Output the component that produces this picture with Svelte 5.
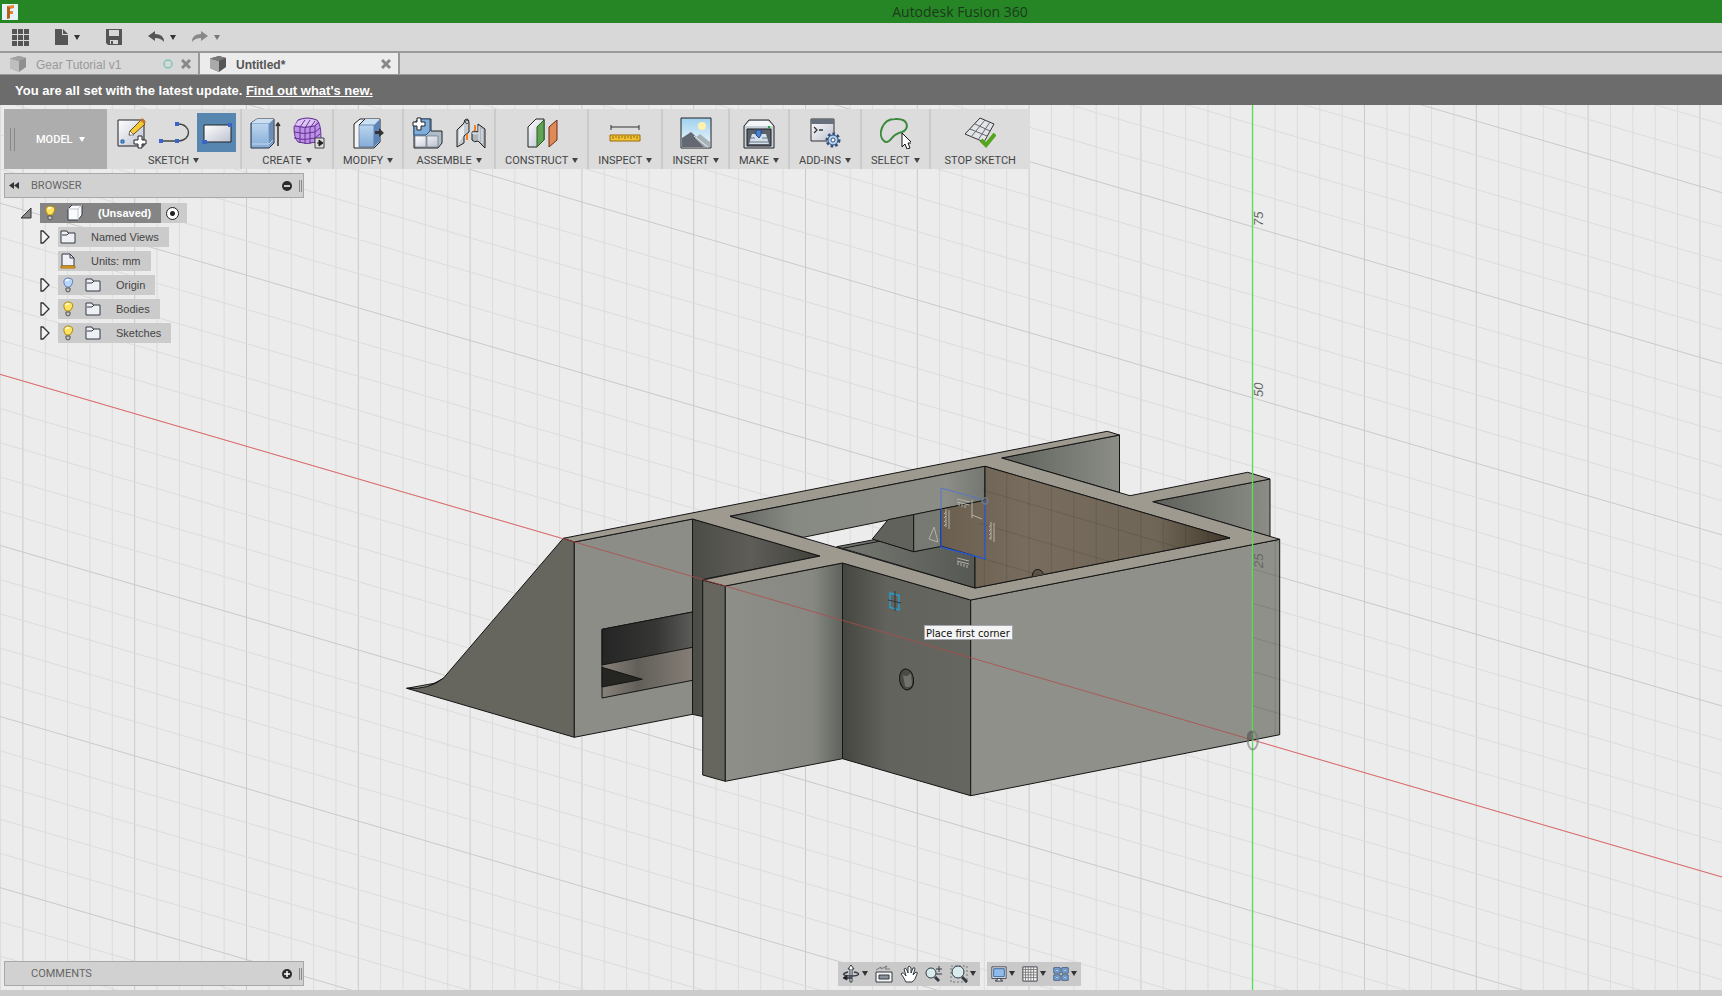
<script lang="ts">
	type Group = { label: string; icons: string[]; menu: boolean };

	const groups: Group[] = [
		{ label: 'SKETCH', icons: ['sketch', 'arc', 'rectangle'], menu: true },
		{ label: 'CREATE', icons: ['extrude', 'form'], menu: true },
		{ label: 'MODIFY', icons: ['presspull'], menu: true },
		{ label: 'ASSEMBLE', icons: ['component', 'joint'], menu: true },
		{ label: 'CONSTRUCT', icons: ['plane'], menu: true },
		{ label: 'INSPECT', icons: ['measure'], menu: true },
		{ label: 'INSERT', icons: ['image'], menu: true },
		{ label: 'MAKE', icons: ['printer'], menu: true },
		{ label: 'ADD-INS', icons: ['script'], menu: true },
		{ label: 'SELECT', icons: ['select'], menu: true },
		{ label: 'STOP SKETCH', icons: ['stop'], menu: false }
	];

	const tree = [
		{ label: 'Named Views', arrow: true, icons: ['folder'] },
		{ label: 'Units: mm', arrow: false, icons: ['units'] },
		{ label: 'Origin', arrow: true, icons: ['bulb-off', 'folder'] },
		{ label: 'Bodies', arrow: true, icons: ['bulb', 'folder'] },
		{ label: 'Sketches', arrow: true, icons: ['bulb', 'folder'] }
	];

	const navTools = [
		{ name: 'orbit', menu: true },
		{ name: 'look', menu: false },
		{ name: 'pan', menu: false },
		{ name: 'zoom', menu: false },
		{ name: 'fit', menu: true }
	];

	const displayTools = ['display', 'grid', 'viewports'];

	let activeTool = $state('rectangle');

	// Ground grid: every fifth line is a major one
	const stepX = 22.36;
	const stepY = 34.22;
	const slope = 0.292;
	const originX = 1252.7;
	const axisY = 374.3;

	const verticals = Array.from({ length: 79 }, (_, i) => i - 57).map((n) => ({
		x: originX + n * stepX,
		major: n % 5 === 0
	}));

	const slants = Array.from({ length: 42 }, (_, i) => i - 23).map((n) => ({
		y: axisY + n * stepY,
		major: n % 5 === 0
	}));
</script>

{#snippet gridLines()}
	{#each verticals as line}
		<path class={line.major ? 'major' : 'minor'} d="M{line.x} 100V1000" />
	{/each}
	{#each slants as line}
		<path class={line.major ? 'major' : 'minor'} d="M0 {line.y}L1722 {line.y + 1722 * slope}" />
	{/each}
{/snippet}

{#snippet caret()}
	<svg class="caret" width="6" height="5" viewBox="0 0 6 5" aria-hidden="true"><path d="M0 0h6L3 5z" fill="currentColor" /></svg>
{/snippet}

{#snippet cube(dim: boolean)}
	<svg width="16" height="16" viewBox="0 0 16 16" aria-hidden="true" opacity={dim ? 0.55 : 1}>
		<path d="M0 2.500L9 0l7 2v9l-7 5-9-4z" fill="#555" />
		<path d="M0 2.500L9 5v11l-9-4z" fill="#aaa" />
		<path d="M0 2.500L9 0l7 2-7 3z" fill="#777" />
	</svg>
{/snippet}

{#snippet toolIcon(name: string)}
	<svg width="32" height="32" viewBox="0 0 32 32" fill="none" aria-hidden="true">
		{#if name === 'sketch'}
			<path d="M3 3h26v26H3z" fill="url(#paper)" stroke="#222" />
			<path d="M15 14l11-11 4 4-11 10-5 1z" fill="#f3cc35" stroke="#6b4a1c" />
			<path d="M25 3l2-2 4 4-2 2z" fill="#c7762f" />
			<path d="M14 18l1-4 4 4z" fill="#fff" stroke="#444" stroke-width=".6" />
			<path d="M6 23h3v3H6z" fill="#4fa3e8" stroke="#2660a8" />
			<path d="M23 19h4v4h4v4h-4v4h-4v-4h-4v-4h4z" fill="#fff" stroke="#222" />
		{:else if name === 'arc'}
			<path d="M3 24h17M20 24c14 0 14-17 0-17" stroke="#444" stroke-width="1.400" />
			<path d="M1 22h4v4H1zM17 22h4v4h-4zM17 5h4v4h-4z" fill="#3866c8" />
		{:else if name === 'rectangle'}
			<path d="M3 8h27v17H3z" fill="url(#paper)" stroke="#222" />
			<path d="M1 23h5v4H1zM27 6h4v4h-4z" fill="#3866c8" />
		{:else if name === 'extrude'}
			<path d="M1 6l6-4h17v24l-5 5H1z" fill="#8fb3d8" stroke="#222e40" />
			<path d="M1 6l6-4h17l-5 4z" fill="#cde0f2" />
			<path d="M2 7h16v23H2z" fill="url(#blue)" />
			<path d="M19 7l4-4v22l-4 4z" fill="#6c8db8" />
			<path d="M2 27h17l4-4" stroke="#c6d9ec" />
			<path d="M28 29V7M26 9l2-3 2 3" stroke="#333" stroke-width="1.500" />
		{:else if name === 'form'}
			<path d="M5 3q9-4 19 0 4 4 4 18-2 3-5 4-9 3-18 0-4-4-4-15z" fill="#bd91e8" stroke="#633391" />
			<path d="M5 4q9-4 19 0l-3 4Q10 10 2 8z" fill="#dfc5f5" />
			<path d="M2 9q9 3 20 0l4-4M1 15q10 3 21 0l5-4M1 21q10 3 21 0l5-4M7 10v16M12 11v16M17 11v16M22 9v17M7 10l5-7M12 11l5-8M17 11l5-7" stroke="#633391" />
			<path d="M22 21h9v10h-9z" fill="#ddd" stroke="#444" />
			<path d="M24 26h3M26 23l4 3-4 3z" fill="#222" stroke="#222" />
		{:else if name === 'presspull'}
			<path d="M2 7l6-5h20v23l-6 6H2z" fill="#f4f4f4" stroke="#222" />
			<path d="M7 8l5-6h16l-6 6z" fill="#cae0f5" />
			<path d="M7 8h15v22H7z" fill="url(#blue)" stroke="#3a577e" stroke-width=".6" />
			<path d="M22 8l6-6v22l-6 6z" fill="#5c84b6" />
			<path d="M7 8l6-6" stroke="#222" />
			<path d="M23 14h4v-3l5 5-5 4v-3h-4z" fill="#333" />
		{:else if name === 'component'}
			<path d="M2 19V6l4-4h13v12h11v12l-4 5H2z" fill="#aebdcb" stroke="#222" />
			<path d="M2 6l4-4h12v12l-4 4H2z" fill="#80aeda" stroke="#29537f" />
			<path d="M3 19h11v11H3zM15 19h11v11H15z" fill="url(#paper)" stroke="#586470" stroke-width=".6" />
			<path d="M5 1h4v4h4v4H9v4H5V9H1V5h4z" fill="#fff" stroke="#222" />
		{:else if name === 'joint'}
			<path d="M2 13l7-7q0-4 3-4 2 0 2 4v9l-5 4v7l-7 4z" fill="#c3cad0" stroke="#222" />
			<path d="M4 13l5-5v10l-5 8z" fill="#e8ecf0" /><circle cx="12" cy="5" r="1.500" fill="#fff" stroke="#444" />
			<path d="M30 12l-7-5v8q-6-2-6 1v7q2 3 6 1l7 7z" fill="#adb5bd" stroke="#222" />
			<path d="M24 9v15M17 16q3 2 6 0M27 12v14" stroke="#e9edf0" />
			<path d="M12 17v6M20 8v6" stroke="#f18029" stroke-width="2" />
		{:else if name === 'plane'}
			<path d="M2 10l8-8h8v21l-7 7H2z" fill="url(#paper)" stroke="#222" />
			<path d="M11 10l7-7v20l-7 7z" fill="#61a352" stroke="#285e26" />
			<path d="M23 10l8-7v20l-8 7z" fill="#e08a57" stroke="#6a2f16" />
		{:else if name === 'measure'}
			<path d="M2 8v5M2 10h28M30 8v5" stroke="#333" />
			<path d="M1 18h30v6H1z" fill="#efc534" stroke="#9e680c" />
			<path d="M4 19v3M7 19v2M10 19v3M13 19v2M16 19v3M19 19v2M22 19v3M25 19v2M28 19v3" stroke="#9e680c" />
		{:else if name === 'image'}
			<path d="M1 1h30v30H1z" fill="url(#sky)" stroke="#222" />
			<circle cx="22" cy="9" r="4" fill="#fff0ad" />
			<path d="M2 21l9-6 16 15H2z" fill="#646873" />
			<path d="M15 21l5-4 10 8v5h-6z" fill="#a6b2b8" />
			<path d="M14 19l14 11" stroke="#eee" />
		{:else if name === 'printer'}
			<path d="M1 9l5-6h20l5 6v22H1z" fill="#c8d0d8" stroke="#222" />
			<path d="M2 9l5-5h18l5 5z" fill="#f4f7fa" />
			<path d="M4 12h24v17H4z" fill="#596169" stroke="#222" />
			<path d="M9 17h14l3 10H6z" fill="#d3e0eb" />
			<path d="M13 13h5v5l-2 3-3-3z" fill="#4b83d0" stroke="#244b8c" />
			<path d="M6 25h20M8 21h4M19 21h5" stroke="#697682" /><path d="M25 9h2v2h-2z" fill="#22a33b" />
		{:else if name === 'script'}
			<path d="M2 2h23v22H2z" fill="url(#paper)" stroke="#333" /><path d="M2 2h23v5H2z" fill="#69707d" />
			<path d="M5 10l3 3-3 3M10 13h4" stroke="#333" stroke-width="1.300" />
			<circle cx="24" cy="23" r="6" fill="#b4d2ef" stroke="#344e77" stroke-width="3" stroke-dasharray="2.500 2" />
			<circle cx="24" cy="23" r="5" fill="#b4d2ef" stroke="#344e77" /><circle cx="24" cy="23" r="2" fill="#fff" stroke="#344e77" />
		{:else if name === 'select'}
			<path d="M5 24C-2 18 3 2 16 2c15-1 14 11 7 13-9 2-8 5-13 9q-3 2-5 0z" stroke="#3a8a3d" stroke-width="2" />
			<path d="M23 16v14l3-3 2 5 3-1-2-5h4z" fill="#fff" stroke="#111" />
		{:else}
			<path d="M16 1l14 6-10 18L1 17z" fill="#e2e4e8" stroke="#333" />
			<path d="M21 3L7 20M26 5L14 23M11 7l15 7M6 12l17 7" stroke="#62676e" />
			<path d="M17 23l5 5 9-11" stroke="#52a51c" stroke-width="4" />
		{/if}
	</svg>
{/snippet}

{#snippet treeIcon(name: string)}
	<svg width="16" height="16" viewBox="0 0 16 16" fill="none" aria-hidden="true">
		{#if name === 'folder'}
			<path d="M1 14V2h6l1 2h7v10z" fill="#eef0f4" stroke="#333a46" />
			<path d="M2 6h5l2-2" stroke="#333a46" />
		{:else if name === 'units'}
			<path d="M3 1h7l4 4v8H2V1z" fill="#eef0f4" stroke="#333a46" /><path d="M10 1v4h4" stroke="#333a46" />
			<path d="M1 13h14v2H1z" fill="#f2b72d" stroke="#a56e0d" />
		{:else if name === 'body'}
			<path d="M1 4l4-4h10v10l-4 5H1z" fill="#f8fafc" stroke="#333a46" />
			<path d="M1 4h10v11M11 4l4-4" stroke="#c1c8cf" />
		{:else}
			<path d="M6 10Q1 3 7 1q8 0 5 6l-2 3z" fill={name === 'bulb' ? '#ffe461' : '#bad6fb'} stroke={name === 'bulb' ? '#b28a0b' : '#6080b8'} />
			<path d="M6 4q1-2 3-1" stroke="#fff" stroke-width="1.500" />
			<path d="M6 11h4v3l-2 1-2-1z" fill="#bec5cc" stroke="#555" />
		{/if}
	</svg>
{/snippet}

{#snippet navIcon(name: string, size: number)}
	<svg width={size} height={size} viewBox="0 0 18 18" fill="none" stroke="#333a44" aria-hidden="true">
		{#if name === 'orbit'}
			<path d="M8 17V4H6l3-4 3 4h-2v13z" fill="#fff" />
			<path d="M6 7c-8 2-4 4 3 4 9 0 10-3 3-4M3 13h7" stroke-width="1.300" /><path d="M5 10l-4 3 4 2z" fill="#111" />
		{:else if name === 'look'}
			<path d="M1 7h16v10H1z" fill="#f5f5f5" /><path d="M4 10h10v4H4z" fill="#8c929b" /><path d="M1 5l5-3v2l6-3-2 3h5" stroke="#777" />
		{:else if name === 'pan'}
			<path d="M6 17Q3 11 1 9q2-3 5 2L4 4q2-2 3 1l1 3V2q2-2 3 1v5l2-5q2-1 2 1l-2 6 3-3q2 0 1 2-2 7-5 8z" fill="#fff" />
		{:else if name === 'zoom'}
			<circle cx="6" cy="8" r="5" fill="#d8ecee" /><path d="M10 12l4 4" stroke-width="3" /><path d="M14 1v6M11 4h6M11 9h6" />
		{:else if name === 'fit'}
			<path d="M1 1h16v16H1z" stroke-dasharray="2 2" stroke="#777" /><circle cx="8" cy="7" r="6" fill="#d8ecee" /><path d="M12 12l5 5" stroke-width="3" />
		{:else if name === 'display'}
			<path d="M1 1h16v13H1z" fill="#f5f5f5" /><path d="M3 3h12v9H3z" fill="#8fbcec" stroke="#315b90" /><path d="M7 14v2H5v1h8v-1h-2v-2z" fill="#eee" />
		{:else if name === 'grid'}
			<path d="M1 1h16v16H1z" fill="#f5f5f5" /><path d="M1 4h16M1 7h16M1 10h16M1 13h16M4 1v16M7 1v16M10 1v16M13 1v16" stroke="#777" />
		{:else}
			<path d="M1 2h7v6H1zM10 2h7v6h-7zM1 10h7v6H1zM10 10h7v6h-7z" fill="#91b9e7" stroke="#28476f" />
			<path d="M3 4h3v2H3zM12 4h3v2h-3zM3 12h3v2H3zM12 12h3v2h-3z" fill="#d8eafa" stroke="#5986ba" />
		{/if}
	</svg>
{/snippet}

<div class="app">
	<header class="titlebar">
		<svg class="logo" width="16" height="16" viewBox="0 0 16 16" aria-hidden="true">
			<path d="M0 0h16v16H0z" fill="#e4f2fa" />
			<path d="M5 2l7-1v3l-4 1v2h3v3H8v4l-3 1z" fill="#e8862e" /><path d="M5 2l3 2v10l-3 1z" fill="#b85f1f" />
		</svg>
		<h1>Autodesk Fusion 360</h1>
	</header>

	<nav class="quickbar" aria-label="Quick access">
		<button aria-label="Data panel">
			<svg width="17" height="17" viewBox="0 0 17 17"><path d="M0 0h5v5H0zM6 0h5v5H6zM12 0h5v5h-5zM0 6h5v5H0zM6 6h5v5H6zM12 6h5v5h-5zM0 12h5v5H0zM6 12h5v5H6zM12 12h5v5h-5z" fill="#555" /></svg>
		</button>
		<button aria-label="File">
			<svg width="13" height="16" viewBox="0 0 13 16"><path d="M0 0h7v6h6v10H0zM8 0l5 5H8z" fill="#555" /></svg>
			{@render caret()}
		</button>
		<button aria-label="Save">
			<svg width="16" height="16" viewBox="0 0 16 16"><path d="M0 0h16v16H2l-2-2z" fill="#555" /><path d="M3 1h10v6H3zM4 11h8v4H4z" fill="#d8d8d8" /><path d="M5 12h2v3H5z" fill="#555" /></svg>
		</button>
		<button aria-label="Undo">
			<svg width="16" height="12" viewBox="0 0 16 12"><path d="M0 5l7-5v3q9 0 9 8-3-4-9-4v3z" fill="#555" /></svg>
			{@render caret()}
		</button>
		<button class="dim" aria-label="Redo">
			<svg width="16" height="12" viewBox="0 0 16 12"><path d="M16 5L9 0v3Q0 3 0 11q3-4 9-4v3z" fill="#888" /></svg>
			{@render caret()}
		</button>
	</nav>

	<div class="tabs">
		<div class="tab">
			<button class="tab-name">{@render cube(true)}<span>Gear Tutorial v1</span></button>
			<svg width="10" height="10" viewBox="0 0 10 10" aria-hidden="true"><circle cx="5" cy="5" r="4" fill="none" stroke="#78c4b4" stroke-width="1.400" /></svg>
			<button class="close" aria-label="Close Gear Tutorial v1"><svg width="10" height="10" viewBox="0 0 10 10"><path d="M1 1l8 8M9 1L1 9" stroke="#888" stroke-width="3" /></svg></button>
		</div>
		<div class="tab active">
			<button class="tab-name">{@render cube(false)}<span>Untitled*</span></button>
			<button class="close" aria-label="Close Untitled"><svg width="10" height="10" viewBox="0 0 10 10"><path d="M1 1l8 8M9 1L1 9" stroke="#888" stroke-width="3" /></svg></button>
		</div>
	</div>

	<p class="notice">You are all set with the latest update. <a href="#whats-new">Find out what's new.</a></p>

	<main class="workspace">
		<svg class="canvas" viewBox="0 105 1722 885" preserveAspectRatio="xMidYMid slice" role="img" aria-label="3D model view">
			<defs>
				<linearGradient id="paper" x2="1" y2="1"><stop stop-color="#fff" /><stop offset="1" stop-color="#bcc1cf" /></linearGradient>
				<linearGradient id="blue" x2="0" y2="1"><stop stop-color="#bbd5ee" /><stop offset="1" stop-color="#86acd8" /></linearGradient>
				<linearGradient id="sky" x2="0" y2="1"><stop stop-color="#9fd0ee" /><stop offset="1" stop-color="#f3fafd" /></linearGradient>
				<linearGradient id="recess"><stop stop-color="#4c4c47" /><stop offset=".45" stop-color="#5e5d57" /><stop offset="1" stop-color="#40403b" /></linearGradient>
				<linearGradient id="pillar"><stop stop-color="#8d8f88" /><stop offset=".75" stop-color="#868881" /><stop offset="1" stop-color="#60625d" /></linearGradient>
				<linearGradient id="front"><stop stop-color="#464641" /><stop offset=".35" stop-color="#62635d" /><stop offset="1" stop-color="#656660" /></linearGradient>
				<linearGradient id="opening"><stop stop-color="#252525" /><stop offset=".6" stop-color="#363635" /><stop offset="1" stop-color="#5b5c58" /></linearGradient>
				<linearGradient id="ledge"><stop stop-color="#87817a" /><stop offset=".4" stop-color="#625f59" /><stop offset="1" stop-color="#857e76" /></linearGradient>
				<linearGradient id="backwall"><stop stop-color="#62645f" /><stop offset=".25" stop-color="#878983" /><stop offset=".85" stop-color="#8b8d86" /><stop offset="1" stop-color="#747671" /></linearGradient>
				<linearGradient id="brown"><stop stop-color="#6b6050" /><stop offset=".3" stop-color="#776c5d" /><stop offset=".75" stop-color="#706657" /><stop offset="1" stop-color="#41372a" /></linearGradient>
				<linearGradient id="fin"><stop stop-color="#5e605b" /><stop offset=".6" stop-color="#797b75" /><stop offset="1" stop-color="#8b8d86" /></linearGradient>
				<linearGradient id="floor"><stop stop-color="#777973" /><stop offset="1" stop-color="#565853" /></linearGradient>
				<clipPath id="overlay-clip"><path d="M1252.700 544L1279.700 539.300V734.700L1252.700 740zM985 466.300L1230 538 975 588V556z" /></clipPath>
			</defs>

			<path d="M0 100h1722v900H0z" fill="#ececec" />
			<g class="lines">{@render gridLines()}</g>

			<!-- Body faces -->
			<g class="faces">
				<path d="M1001.700 458L1119.500 435V492.500z" fill="url(#fin)" />
				<path d="M1152.700 501.700L1270 479V536.500z" fill="url(#fin)" />
				<path d="M406.700 688.300L436 683q6-2 8-5L422 690z" fill="#999b95" />
				<path d="M406.700 688.300Q429 690 443.300 678.300L563.300 538.300 574.300 542V737.300z" fill="#66665f" />
				<path d="M574.300 542L692.500 519V714.300L574.300 737.300z" fill="#8b8d86" />
				<path d="M602 629.300L692.500 612V680.300L602 698z" fill="url(#ledge)" />
				<path d="M602 629.300L692.500 612V647.300L602 665z" fill="url(#opening)" />
				<path d="M602 667.300L642.300 679.300 602 687z" fill="#252522" />
				<path d="M692.500 519L820 556 703.300 579.300V716.700L692.500 714.300z" fill="url(#recess)" />
				<path d="M702.700 580L725.300 586V781.300L702.700 775z" fill="#66665f" />
				<path d="M725.300 586L842.500 563V758.700L725.300 781.300z" fill="url(#pillar)" />
				<path d="M842.500 563L970.700 600V795.700L842.500 758.700z" fill="url(#front)" />
				<path d="M970.700 600L1279.700 539.300V734.700L970.700 795.700z" fill="#8f9089" />
				<path
					fill="#9e9a90"
					fill-rule="evenodd"
					d="M563.300 538.300L1107.300 431.300 1119.500 435 1001.700 458 1130 495.700 1247.700 472.300 1270 479 1152.700 501.700 1279.700 539.300 970.700 600 842.500 563 725.300 586 702.700 580 820 556 692.500 519 574.300 542zM730 516.300L975 588 1230 538 985 466.300z"
				/>
				<path d="M730 516.300L985 466.300V500.300L803.300 537.300z" fill="url(#backwall)" />
				<path d="M836.700 546.700L875 539.500 913.700 551.700 940.700 546 975 556V588z" fill="url(#floor)" />
				<path d="M841.700 548.500L881 541" fill="none" />
				<path d="M888 519.700L913.700 514.500V551.700L872.300 539z" fill="#60625b" />
				<path d="M913.700 514.500L940.700 509V546.500L913.700 551.700z" fill="#777973" />
				<path d="M985 466.300L1230 538 975 588V556L940.700 546V509L985 500.300z" fill="url(#brown)" />
				<path d="M1032 576.500q1-7 5.500-7t6 5" fill="#5d5344" />
				<ellipse cx="906.500" cy="679.500" rx="7" ry="10.500" fill="#4a4b45" transform="rotate(-8 906 679)" />
				<path d="M903 675q4 3 8-2l1 12q-4 4-7 1z" fill="#70726b" stroke="none" />
			</g>
			<g class="lines over" clip-path="url(#overlay-clip)">{@render gridLines()}</g>

			<!-- Axes and scale marks -->
			<path d="M0 374.300L563 538.700M1252.700 740L1722 877" stroke="#e26a6a" fill="none" />
			<path d="M563 538.700L1252.700 740" stroke="#b04a4a" fill="none" opacity=".75" />
			<path d="M1252.500 105V990" stroke="#55e055" stroke-width="1.300" />
			<ellipse cx="1252.700" cy="740.500" rx="5" ry="9" fill="none" stroke="#777" stroke-width="2" opacity=".6" />
			<path d="M1247 740v-6q3-5 6-3v9z" fill="#555" opacity=".6" />
			<g class="scale">
				<text transform="translate(1263 226) rotate(-90)">75</text>
				<text transform="translate(1263 397) rotate(-90)">50</text>
				<text transform="translate(1263 568) rotate(-90)">25</text>
			</g>

			<!-- Sketch profile and its constraint glyphs -->
			<path d="M941 509V488L985 500.300" fill="none" stroke="#5578c6" />
			<path d="M941 509V547L985 559V500.300" fill="none" stroke="#2458d8" stroke-width="1.300" />
			<circle cx="985" cy="501" r="3" fill="none" stroke="#777" stroke-width="1.500" />
			<g class="glyphs">
				<path d="M946 509v18M949 510v19M946 512l-2 2M946 516l-2 2M946 520l-2 2M946 524l-2 2" />
				<path d="M991 522v18M994 523v19M991 525l-2 2M991 529l-2 2M991 533l-2 2M991 537l-2 2" />
				<path d="M957 499l13 3M957 502l12 3M959 503v3M962 504v3M965 505v3" />
				<path d="M957 558l12 3M957 561l12 3M958 562v3M961 563v3M964 564v3M967 565v3" />
				<path d="M972 500v18M972 515l10 4M934 527l-5 12 9 3z" />
			</g>

			<!-- Rectangle cursor with its hint -->
			<path d="M890 593l9 2.500v14.500l-9-2.500z" fill="none" stroke="#21a2d8" stroke-width="1.300" />
			<path d="M895 591v20M888 600l13 3" fill="none" stroke="#333" />
			<rect x="924.500" y="625.500" width="88" height="14" fill="#f4f4f4" stroke="#a5a5ad" />
			<text class="hint" x="926" y="637">Place first corner</text>
		</svg>

		<div class="top">
			<div class="toolbar">
				<button class="model"><span class="grip"></span><span>MODEL</span>{@render caret()}</button>
				{#each groups as group}
					<div class="group">
						<div class="tools">
							{#each group.icons as icon}
								<button class="tool" class:active={activeTool === icon} aria-label={icon} onclick={() => (activeTool = icon)}>{@render toolIcon(icon)}</button>
							{/each}
						</div>
						<button class="group-label" class:plain={!group.menu}>{group.label}{#if group.menu}{@render caret()}{/if}</button>
					</div>
				{/each}
			</div>

			<section class="panel">
				<button aria-label="Collapse browser"><svg width="10" height="7" viewBox="0 0 10 7"><path d="M5 0v7L0 3.500zM10 0v7L5 3.500z" fill="#333" /></svg></button>
				<h2>BROWSER</h2>
				<button aria-label="Hide browser"><svg width="10" height="10" viewBox="0 0 10 10"><circle cx="5" cy="5" r="5" fill="#2c2c2c" /><path d="M2 5h6" stroke="#fff" stroke-width="1.500" /></svg></button>
				<span class="grip"></span>
			</section>

			<ul class="tree">
				<li class="root">
					<button aria-label="Collapse document"><svg width="12" height="12" viewBox="0 0 12 12"><path d="M1 11L11 1v10z" fill="#888" stroke="#333" /></svg></button>
					<div class="root-row">
						<button class="node selected">{@render treeIcon('bulb')}{@render treeIcon('body')}<span>(Unsaved)</span></button>
						<label class="activate"><input type="radio" checked aria-label="Activate component" /></label>
					</div>
				</li>
				{#each tree as item}
					<li>
						{#if item.arrow}
							<button aria-label="Expand {item.label}"><svg width="10" height="14" viewBox="0 0 10 14"><path d="M1 1v12h2l6-6-6-6z" fill="#f4f4f4" stroke="#333" stroke-width="1.300" /></svg></button>
						{:else}
							<span class="no-arrow"></span>
						{/if}
						<button class="node">{#each item.icons as icon}{@render treeIcon(icon)}{/each}<span>{item.label}</span></button>
					</li>
				{/each}
			</ul>
		</div>

		<div class="bottom">
			<section class="panel comments">
				<h2>COMMENTS</h2>
				<button aria-label="Show comments"><svg width="10" height="10" viewBox="0 0 10 10"><circle cx="5" cy="5" r="5" fill="#2c2c2c" /><path d="M2 5h6M5 2v6" stroke="#fff" stroke-width="1.500" /></svg></button>
				<span class="grip"></span>
			</section>
			<div class="navbars">
				<div class="navbar">
					{#each navTools as tool}
						<button aria-label={tool.name}>{@render navIcon(tool.name, 18)}{#if tool.menu}{@render caret()}{/if}</button>
					{/each}
				</div>
				<div class="navbar">
					{#each displayTools as tool}
						<button aria-label={tool}>{@render navIcon(tool, 16)}{@render caret()}</button>
					{/each}
				</div>
			</div>
		</div>
	</main>
	<footer></footer>
</div>

<style>
	:global(body) {
		margin: 0;
	}

	.app {
		display: flex;
		flex-direction: column;
		min-height: 100vh;
		background: #ccc;
		font-family: Roboto, 'Liberation Sans', sans-serif;
		font-size: 11px;
		color: #444;
	}

	button {
		display: flex;
		align-items: center;
		padding: 0;
		border: 0;
		background: none;
		font: inherit;
		color: inherit;
	}

	svg {
		display: block;
		flex: none;
	}

	h1,
	h2,
	p,
	ul {
		margin: 0;
		padding: 0;
		font-weight: 400;
	}

	/* Window chrome */
	.titlebar {
		display: flex;
		align-items: center;
		height: 23px;
		padding-left: 2px;
		background: #268626;
		box-sizing: border-box;
	}

	.titlebar h1 {
		flex: 1;
		padding-left: 180px;
		font-family: 'Open Sans', sans-serif;
		font-size: 14px;
		text-align: center;
		color: #1c3a1c;
	}

	.quickbar {
		display: flex;
		align-items: center;
		gap: 26px;
		height: 28px;
		padding: 0 12px;
		background: #d8d8d8;
		border-bottom: 2px solid #999;
		color: #333;
	}

	.quickbar button {
		gap: 6px;
	}

	.quickbar .dim {
		margin-left: -10px;
		color: #777;
	}

	.tabs {
		display: flex;
		height: 21px;
		background: #d8d8d8;
		border-bottom: 1px solid #999;
	}

	.tab {
		display: flex;
		align-items: center;
		gap: 8px;
		width: 200px;
		padding: 0 7px 0 10px;
		border-right: 2px solid #999;
		box-sizing: border-box;
		color: #999;
	}

	.tab.active {
		background: #ececec;
		color: #555;
		font-weight: 700;
	}

	.tab-name {
		flex: 1;
		gap: 10px;
		font-family: 'Liberation Sans', Arial, sans-serif;
		font-size: 12px;
	}

	.tab-name span {
		padding-top: 3px;
	}

	.notice {
		height: 30px;
		padding-left: 15px;
		background: #6c6c6c;
		font: 700 13px/32px 'Liberation Sans', Arial, sans-serif;
		color: #fff;
	}

	.notice a {
		color: #fff;
	}

	/* Workspace */
	.workspace {
		position: relative;
		flex: 1;
		display: flex;
		flex-direction: column;
		justify-content: space-between;
		overflow: hidden;
	}

	.canvas {
		position: absolute;
		inset: 0;
		width: 100%;
		height: 100%;
	}

	.lines path {
		fill: none;
	}

	.lines .minor {
		stroke: #dcdcdc;
	}

	.lines .major {
		stroke: #cacaca;
	}

	.lines.over path {
		stroke: #000;
		opacity: 0.1;
	}

	.faces {
		stroke: #151515;
		stroke-linejoin: round;
	}

	.scale text {
		font: italic 13px 'Liberation Sans', Arial, sans-serif;
		fill: #666;
	}

	.glyphs {
		fill: none;
		stroke: #b5b1a8;
	}

	.hint {
		font: 11px 'DejaVu Sans Condensed', 'Open Sans', sans-serif;
		fill: #111;
	}

	.top,
	.bottom {
		position: relative;
		padding: 4px;
	}

	.toolbar {
		display: flex;
		width: max-content;
		height: 60px;
		background: #dcdcdc;
	}

	.model {
		gap: 6px;
		width: 103px;
		padding-left: 6px;
		background: #adadad;
		color: #fff;
		font-weight: 500;
	}

	.grip {
		width: 3px;
		height: 12px;
		border: solid #888;
		border-width: 0 1px;
		box-sizing: border-box;
	}

	.model .grip {
		width: 5px;
		height: 23px;
		margin-right: 15px;
	}

	.group {
		display: flex;
		flex-direction: column;
		align-items: center;
		padding: 4px 4px 0;
	}

	.group + .group {
		border-left: 2px solid #cbcbcb;
	}

	.tools {
		display: flex;
		gap: 4px;
	}

	.tool {
		justify-content: center;
		width: 39px;
		height: 39px;
	}

	.tool.active {
		background: #5787b0;
	}

	.group-label {
		gap: 4px;
		height: 16px;
		padding: 0 5px;
	}

	.group-label.plain {
		padding: 0 10px;
	}

	.panel {
		display: flex;
		align-items: center;
		width: 300px;
		height: 25px;
		padding: 0 1px 0 4px;
		border: 1px solid #a8a8a8;
		background: #d1d1d1;
		box-sizing: border-box;
		color: #666;
	}

	.panel h2 {
		flex: 1;
		padding-left: 12px;
		font-size: 11px;
	}

	.panel .grip {
		margin-left: 7px;
	}

	.top .panel {
		margin-top: 4px;
	}

	.tree {
		display: flex;
		flex-direction: column;
		gap: 4px;
		margin: 5px 0 0 16px;
		list-style: none;
		font-family: 'Liberation Sans', Arial, sans-serif;
	}

	.tree li {
		display: flex;
		align-items: center;
		gap: 8px;
		height: 20px;
		padding-left: 20px;
	}

	.tree .root {
		padding-left: 0;
	}

	.root-row {
		display: flex;
		background: #cbcbcb;
	}

	.no-arrow {
		width: 10px;
	}

	.node {
		gap: 9px;
		height: 20px;
		padding: 0 10px 0 2px;
		background: #cbcbcb;
	}

	.node span {
		padding-left: 6px;
	}

	.selected {
		background: #858585;
		color: #fff;
		font-weight: 700;
	}

	.activate {
		display: flex;
		align-items: center;
		padding: 0 8px 0 5px;
	}

	.activate input {
		appearance: none;
		width: 13px;
		height: 13px;
		margin: 0;
		border: 1px solid #222;
		border-radius: 50%;
		background: radial-gradient(circle, #222 2px, #fff 3px);
	}

	.bottom {
		display: flex;
		align-items: center;
	}

	.comments h2 {
		padding-left: 22px;
	}

	.navbars {
		display: flex;
		flex: 1;
		justify-content: center;
		gap: 7px;
		padding-right: 104px;
	}

	.navbar {
		display: flex;
		align-items: center;
		gap: 7px;
		height: 24px;
		padding: 0 4px;
		background: #c9c9c9;
		color: #333;
	}

	.navbar button {
		gap: 2px;
	}

	footer {
		height: 6px;
	}
</style>
